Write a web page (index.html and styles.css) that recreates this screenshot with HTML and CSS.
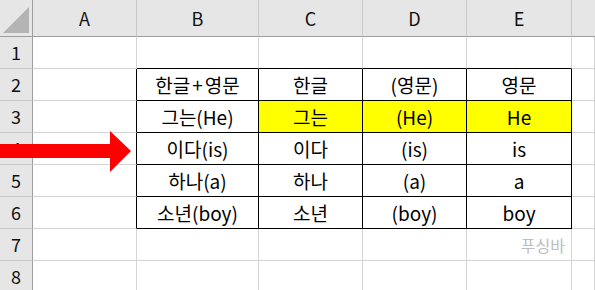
FILE: index.html
```html
<!DOCTYPE html>
<html>
<head lang="ko">
    <meta charset="UTF-8">
    <title>sheet</title>
    <link rel="stylesheet" href="styles.css">
</head>
<body>
<div class="sheet">
    <div class="grid">
        <div class="corner"><span class="tri"></span></div>
        <div class="col-head">A</div>
        <div class="col-head">B</div>
        <div class="col-head">C</div>
        <div class="col-head">D</div>
        <div class="col-head">E</div>
        <div class="col-head last"></div>

        <div class="row-head">1</div>
        <div class="cell"></div>
        <div class="cell top-edge"></div>
        <div class="cell top-edge"></div>
        <div class="cell top-edge"></div>
        <div class="cell top-edge"></div>
        <div class="cell"></div>

        <div class="row-head">2</div>
        <div class="cell left-edge"></div>
        <div class="cell box">한글<span class="plus">+</span>영문</div>
        <div class="cell box">한글</div>
        <div class="cell box">(영문)</div>
        <div class="cell box">영문</div>
        <div class="cell"></div>

        <div class="row-head">3</div>
        <div class="cell left-edge"></div>
        <div class="cell box">그는(He)</div>
        <div class="cell box mark">그는</div>
        <div class="cell box mark">(He)</div>
        <div class="cell box mark">He</div>
        <div class="cell"></div>

        <div class="row-head">4</div>
        <div class="cell left-edge"></div>
        <div class="cell box">이다(is)</div>
        <div class="cell box">이다</div>
        <div class="cell box">(is)</div>
        <div class="cell box">is</div>
        <div class="cell"></div>

        <div class="row-head">5</div>
        <div class="cell left-edge"></div>
        <div class="cell box">하나(a)</div>
        <div class="cell box">하나</div>
        <div class="cell box">(a)</div>
        <div class="cell box">a</div>
        <div class="cell"></div>

        <div class="row-head">6</div>
        <div class="cell left-edge"></div>
        <div class="cell box">소년(boy)</div>
        <div class="cell box">소년</div>
        <div class="cell box">(boy)</div>
        <div class="cell box">boy</div>
        <div class="cell"></div>

        <div class="row-head">7</div>
        <div class="cell"></div>
        <div class="cell"></div>
        <div class="cell"></div>
        <div class="cell"></div>
        <div class="cell sign">푸싱바</div>
        <div class="cell"></div>

        <div class="row-head">8</div>
        <div class="cell"></div>
        <div class="cell"></div>
        <div class="cell"></div>
        <div class="cell"></div>
        <div class="cell"></div>
        <div class="cell"></div>
    </div>

    <svg class="arrow" width="132" height="42" viewBox="0 0 132 42">
        <polygon points="0,13 110,13 110,0 131,20 110,41 110,27 0,27" fill="#ff0000"/>
    </svg>
</div>
</body>
</html>
```

FILE: styles.css
```css
* {
    margin: 0;
    padding: 0;
    box-sizing: border-box;
}

body {
    background-color: #fff;
    font-family: "Noto Sans CJK KR", "Noto Sans", sans-serif;
    overflow: hidden;
}

.sheet {
    position: relative;
    width: 595px;
    height: 290px;
}

.grid {
    display: grid;
    grid-template-columns: 33px 104px 122px 104px 104px 105px 1fr;
    grid-template-rows: 37px repeat(8, 32px);
}

.corner {
    position: relative;
    background-color: #e6e6e6;
    border-right: 1px solid #9e9e9e;
    border-bottom: 1px solid #9e9e9e;
}

.corner .tri {
    position: absolute;
    right: 3px;
    bottom: 3px;
    width: 26px;
    height: 26px;
    background-color: #b4b4b4;
    clip-path: polygon(100% 0, 100% 100%, 0 100%);
}

.col-head {
    background-color: #e6e6e6;
    border-right: 1px solid #c8c8c8;
    border-bottom: 1px solid #9e9e9e;
    font-size: 18px;
    line-height: 36px;
    text-align: center;
    color: #111;
}

.col-head.last {
    border-right: none;
}

.row-head {
    background-color: #e6e6e6;
    border-right: 1px solid #9e9e9e;
    border-bottom: 1px solid #c8c8c8;
    font-size: 18px;
    line-height: 31px;
    text-align: center;
    color: #111;
}

.cell {
    border-right: 1px solid #d4d4d4;
    border-bottom: 1px solid #d4d4d4;
    font-size: 19px;
    line-height: 32px;
    text-align: center;
    color: #000;
    white-space: nowrap;
}

.cell.top-edge {
    border-bottom-color: #000;
}

.cell.left-edge {
    border-right-color: #000;
}

.cell.box {
    border-right-color: #000;
    border-bottom-color: #000;
}

.cell.mark {
    background-color: #ffff00;
}

.plus {
    margin: 0 2px;
}

.cell.sign {
    text-align: right;
    padding-right: 6px;
    font-size: 16px;
    color: #bdbdbd;
}

.arrow {
    position: absolute;
    left: 0;
    top: 131px;
}
```
